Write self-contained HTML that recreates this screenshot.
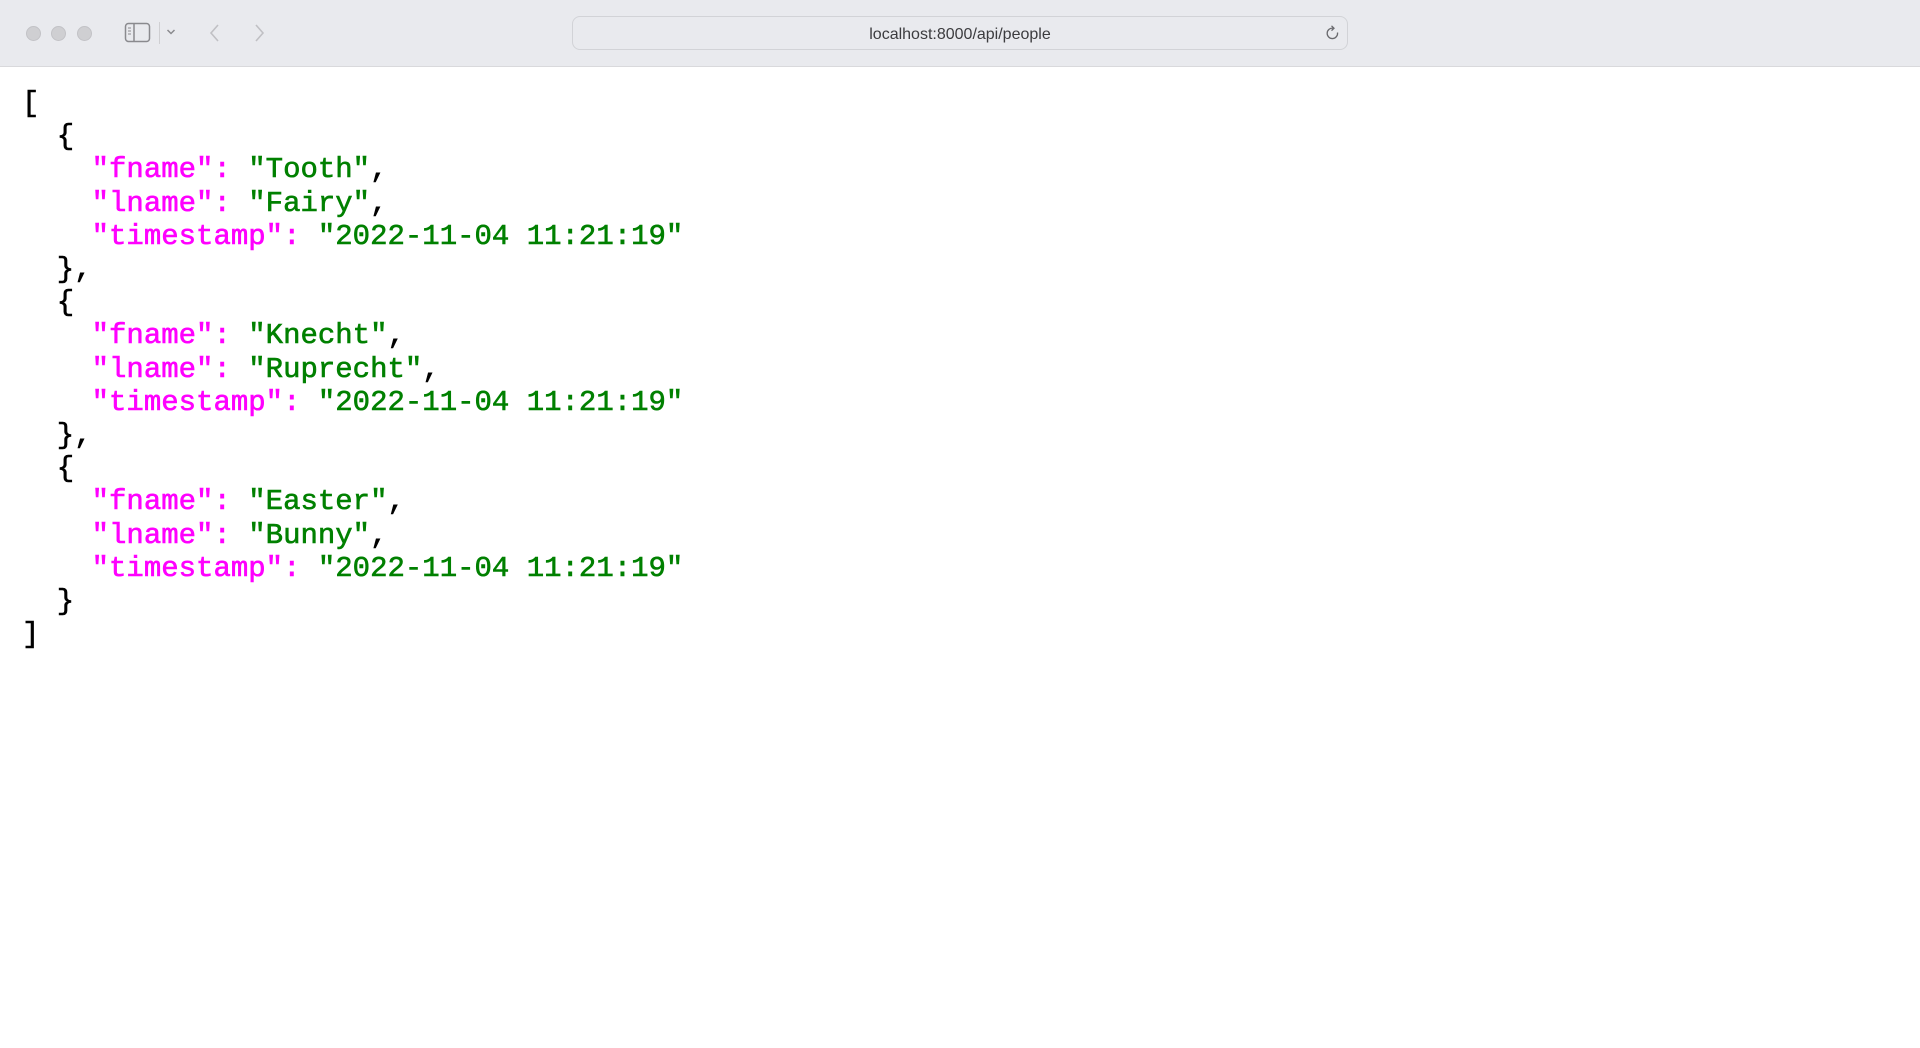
<!DOCTYPE html>
<html><head><style>
html,body{margin:0;padding:0;width:1920px;height:1048px;background:#fff;overflow:hidden}
.bar{position:absolute;left:0;top:0;width:1920px;height:66px;background:#e9eaee;border-bottom:1px solid #d9d9dc}
.dot{position:absolute;top:26px;width:15px;height:15px;border-radius:50%;background:#cfcfd2;border:1px solid #c2c2c6;box-sizing:border-box}
.url{position:absolute;left:572px;top:16px;width:776px;height:34px;box-sizing:border-box;border:1px solid #d2d3d7;border-radius:8px;background:#e9eaee;font:16px "Liberation Sans",sans-serif;color:#3c3c3f;text-align:center;line-height:36px}
pre{position:absolute;left:22px;top:87px;margin:0;font:29px/33.2px "Liberation Mono",monospace;color:#000;-webkit-text-stroke:0.6px currentColor}
.k{color:#f0f}.s{color:#008000}
</style></head><body>
<div class="bar">
<div class="dot" style="left:26px"></div><div class="dot" style="left:51px"></div><div class="dot" style="left:77px"></div>
<svg style="position:absolute;left:124px;top:22px" width="28" height="22" viewBox="0 0 28 22"><rect x="1.5" y="1.5" width="24" height="18" rx="3" fill="none" stroke="#8a8a8e" stroke-width="1.5"/><line x1="10" y1="2" x2="10" y2="19" stroke="#8a8a8e" stroke-width="1.5"/><path d="M4 6h3M4 9h3M4 12h3" stroke="#8a8a8e" stroke-width="1"/></svg>
<div style="position:absolute;left:159px;top:22px;width:1px;height:22px;background:#cfcfd2"></div>
<svg style="position:absolute;left:166px;top:28px" width="10" height="8"><path d="M1.5 2l3.5 3.5 3.5-3.5" fill="none" stroke="#8a8a8e" stroke-width="1.5"/></svg>
<svg style="position:absolute;left:208px;top:22px" width="14" height="22"><path d="M10 3l-7 8 7 8" fill="none" stroke="#c0c0c4" stroke-width="1.6"/></svg>
<svg style="position:absolute;left:252px;top:22px" width="14" height="22"><path d="M4 3l7 8-7 8" fill="none" stroke="#c0c0c4" stroke-width="1.6"/></svg>
<div class="url">localhost:8000/api/people</div>
<svg style="position:absolute;left:1325px;top:24px" width="16" height="18" viewBox="0 0 16 18"><path d="M12.5 8.5A5.2 5.2 0 1 1 8 4.2" fill="none" stroke="#6a6a6e" stroke-width="1.3"/><path d="M6.5 1.8l2.5 2.4-2.5 2.4" fill="none" stroke="#6a6a6e" stroke-width="1.3"/></svg>
</div>
<pre>[
  {
    <span class="k">"fname"</span><span class="k">:</span> <span class="s">"Tooth"</span>,
    <span class="k">"lname"</span><span class="k">:</span> <span class="s">"Fairy"</span>,
    <span class="k">"timestamp"</span><span class="k">:</span> <span class="s">"2022-11-04 11:21:19"</span>
  },
  {
    <span class="k">"fname"</span><span class="k">:</span> <span class="s">"Knecht"</span>,
    <span class="k">"lname"</span><span class="k">:</span> <span class="s">"Ruprecht"</span>,
    <span class="k">"timestamp"</span><span class="k">:</span> <span class="s">"2022-11-04 11:21:19"</span>
  },
  {
    <span class="k">"fname"</span><span class="k">:</span> <span class="s">"Easter"</span>,
    <span class="k">"lname"</span><span class="k">:</span> <span class="s">"Bunny"</span>,
    <span class="k">"timestamp"</span><span class="k">:</span> <span class="s">"2022-11-04 11:21:19"</span>
  }
]</pre>
</body></html>
